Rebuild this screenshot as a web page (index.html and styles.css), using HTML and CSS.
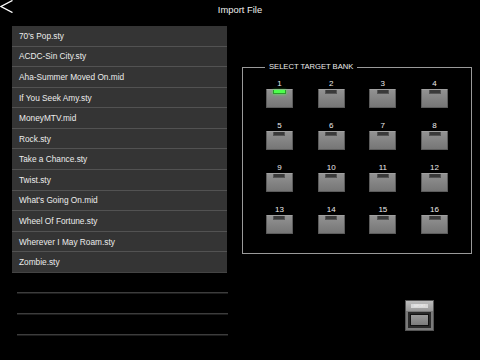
FILE: index.html
```html
<!DOCTYPE html>
<html lang="en">
<head>
    <meta charset="UTF-8">
    <title>Import File</title>
    <link rel="stylesheet" href="styles.css">
</head>
<body>
    <div class="header">
        <svg class="back" width="13" height="13" viewBox="0 0 13 13">
            <path d="M12.5 0.5 L1 6.5 L12.5 12.5" fill="none" stroke="#fff" stroke-width="1.4"/>
        </svg>
        <div class="title">Import File</div>
        <div></div>
    </div>

    <div class="main">
        <!-- file list -->
        <div class="left">
            <div class="list">
                <div class="row">70's Pop.sty</div>
                <div class="row">ACDC-Sin City.sty</div>
                <div class="row">Aha-Summer Moved On.mid</div>
                <div class="row">If You Seek Amy.sty</div>
                <div class="row">MoneyMTV.mid</div>
                <div class="row">Rock.sty</div>
                <div class="row">Take a Chance.sty</div>
                <div class="row">Twist.sty</div>
                <div class="row">What's Going On.mid</div>
                <div class="row">Wheel Of Fortune.sty</div>
                <div class="row">Wherever I May Roam.sty</div>
                <div class="row">Zombie.sty</div>
            </div>
            <div class="lines">
                <div class="line"></div>
                <div class="line"></div>
                <div class="line"></div>
            </div>
        </div>

        <!-- target bank -->
        <div class="right">
            <fieldset class="bank">
                <legend>SELECT TARGET BANK</legend>
                <div class="grid" id="grid"></div>
            </fieldset>
            <div class="import">
                <div class="import-top"><span>IMPORT</span></div>
                <div class="import-body"><div class="import-key"></div></div>
            </div>
        </div>
    </div>

    <script>
        const grid = document.getElementById("grid");
        for (let i = 1; i <= 16; i++) {
            const cell = document.createElement("div");
            cell.classList.add("cell");
            cell.innerHTML = `<div class="num">${i}</div><div class="pad${i === 1 ? " on" : ""}"><div class="led"></div></div>`;
            grid.appendChild(cell);
        }
    </script>
</body>
</html>
```

FILE: styles.css
```css
body {
    margin: 0;
    background: #000;
    font-family: "Liberation Sans", Arial, sans-serif;
    color: #e6e6e6;
    width: 480px;
    height: 360px;
    overflow: hidden;
}
.header {
    display: grid;
    grid-template-columns: 1fr auto 1fr;
    height: 26px;
}
.back {
    display: block;
}
.title {
    font-size: 9.4px;
    line-height: 10px;
    padding-top: 5px;
    color: #eee;
}
.main {
    display: flex;
}
.left {
    margin-left: 12px;
    width: 215px;
}
.list {
    display: flex;
    flex-direction: column;
    height: 247px;
    background: #343434;
}
.row {
    flex: 1;
    display: flex;
    align-items: center;
    padding-left: 7px;
    font-size: 8.3px;
    color: #ececec;
    border-bottom: 1px solid #525252;
}
.row:last-child {
    border-bottom: 1px solid #444;
}
.lines {
    margin: 19px 0 0 5px;
    width: 211px;
    display: flex;
    flex-direction: column;
    gap: 20px;
}
.line {
    height: 1px;
    background: #3c3c3c;
    box-shadow: 0 1px 0 #1c1c1c;
}
.right {
    margin-left: 15px;
    width: 230px;
    padding-top: 36px;
}
.bank {
    margin: 0;
    padding: 7px 0 19px 0;
    border: 1px solid #9a9a9a;
}
.bank legend {
    margin-left: 22px;
    padding: 0 4px;
    font-size: 7.6px;
    line-height: 10px;
    color: #ececec;
}
.grid {
    display: grid;
    grid-template-columns: repeat(4, 51.7px);
    justify-content: center;
    row-gap: 13px;
}
.cell {
    display: flex;
    flex-direction: column;
    align-items: center;
}
.num {
    font-size: 8px;
    line-height: 10px;
    color: #ececec;
}
.pad {
    width: 27px;
    height: 19px;
    box-sizing: border-box;
    border: 1px solid #5c5c5c;
    border-top-color: #a0a0a0;
    border-radius: 1px;
    background: linear-gradient(#929292, #767676);
    display: flex;
    justify-content: center;
}
.led {
    width: 10px;
    height: 3px;
    background: #3a3a3a;
    border: 1px solid #555;
    border-top: none;
}
.pad.on .led {
    width: 11px;
    background: #4dff4d;
    border-color: #2c9a2c;
    box-shadow: 0 0 3px #4dff4d;
}
.import {
    margin: 46px 0 0 163px;
    width: 29px;
    height: 31px;
    display: flex;
    flex-direction: column;
    border: 1px solid #555;
    box-sizing: border-box;
}
.import-top {
    height: 10px;
    background: linear-gradient(#bdbdbd, #9a9a9a);
    display: flex;
    justify-content: center;
    align-items: center;
}
.import-top span {
    font-size: 3px;
    color: #eee;
    background: #d8d8d8;
    padding: 0 3px;
}
.import-body {
    flex: 1;
    background: #2a2a2a;
    border: 2px solid #7a7a7a;
    border-top-width: 1px;
    padding: 2px;
}
.import-key {
    height: 100%;
    background: linear-gradient(#9a9a9a, #7c7c7c);
    border: 1px solid #111;
    box-sizing: border-box;
}
```
